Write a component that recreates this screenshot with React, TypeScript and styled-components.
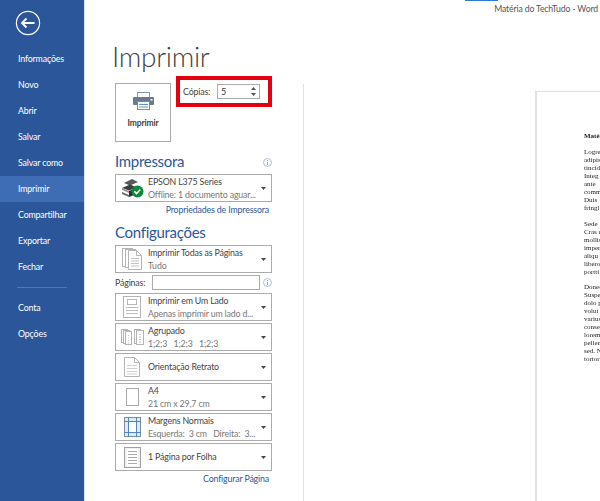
import React from "react";
import styled, { createGlobalStyle } from "styled-components";

const GlobalStyle = createGlobalStyle`
  html, body {
    margin: 0;
    padding: 0;
    background: #ffffff;
  }
  body {
    font-family: Lato, "Open Sans", "Liberation Sans", sans-serif;
    letter-spacing: -0.15px;
  }
`;

const menuTop = ["Informações", "Novo", "Abrir", "Salvar", "Salvar como", "Imprimir", "Compartilhar", "Exportar", "Fechar"];
const menuBottom = ["Conta", "Opções"];

const pageBlocks = [
  ["Logre", "adipis", "tincid", "Integ", "ante", "comm", "Duis", "fringl"],
  ["Sede", "Cras u", "mollis", "imper", "aliqu", "libero", "portti"],
  ["Donec", "Suspe", "dolo p", "volut", "varius", "conse", "lorem", "pellen", "sed. N", "tortor"],
];

const ArrowDown = () => (
  <Caret viewBox="0 0 5 3">
    <path d="M0 0h5L2.5 3z" fill="#444" />
  </Caret>
);

const InfoIcon = () => (
  <svg width="9" height="9" viewBox="0 0 9 9">
    <circle cx="4.5" cy="4.5" r="4" fill="none" stroke="#a9bfdc" />
    <rect x="4" y="4" width="1" height="3" fill="#8fabd2" />
    <rect x="4" y="2" width="1" height="1" fill="#8fabd2" />
  </svg>
);

const Sheet = ({ x, y, w, h, lines = 0 }: { x: number; y: number; w: number; h: number; lines?: number }) => (
  <g>
    <rect x={x + 0.5} y={y + 0.5} width={w} height={h} fill="#fff" stroke="#b4b4b4" />
    {Array.from({ length: lines }).map((_, i) => (
      <path key={i} d={`M${x + 3} ${y + 4.5 + i * 2.5}h${w - 5}`} stroke="#c4c4c4" strokeWidth="1" />
    ))}
  </g>
);

const AllPagesIcon = () => (
  <svg width="20" height="22" viewBox="0 0 20 22">
    <Sheet x={0} y={0} w={10} h={18} />
    <Sheet x={3} y={1} w={10} h={18} />
    <path d="M6.5 2.5h8l5 5v14h-13z" fill="#fff" stroke="#b4b4b4" />
    <path d="M14.5 2.5v5h5" fill="none" stroke="#b4b4b4" />
    <path d="M9 10.5h8M9 13h8M9 15.5h8M9 18h8" stroke="#c4c4c4" />
  </svg>
);

const OneSideIcon = () => (
  <svg width="18" height="22" viewBox="0 0 18 22">
    <rect x="0.5" y="0.5" width="17" height="21" fill="#fff" stroke="#b4b4b4" />
    <rect x="4.5" y="3.5" width="9" height="5" fill="#fff" stroke="#b8b8b8" />
    <path d="M3 11.5h12M3 14.5h12M3 17.5h12" stroke="#bcbcbc" />
  </svg>
);

const CollatedIcon = () => (
  <svg width="23" height="16" viewBox="0 0 23 16">
    <Sheet x={0} y={0} w={6} h={13} />
    <Sheet x={2} y={1} w={6} h={13} />
    <Sheet x={4} y={2} w={6} h={13} lines={4} />
    <Sheet x={13} y={0} w={6} h={14} />
    <Sheet x={15} y={1} w={7} h={14} lines={4} />
  </svg>
);

const PortraitIcon = () => (
  <svg width="16" height="20" viewBox="0 0 16 20">
    <path d="M.5.5h10l5 5v14H.5z" fill="#fff" stroke="#b4b4b4" />
    <path d="M10.5.5v5h5" fill="none" stroke="#b4b4b4" />
    <path d="M3 8.5h10M3 11.5h10M3 14.5h10M3 17h10" stroke="#cfcfcf" />
  </svg>
);

const A4Icon = () => (
  <svg width="13" height="18" viewBox="0 0 13 18">
    <rect x="0.5" y="0.5" width="12" height="17" fill="#fff" stroke="#a8a8a8" />
  </svg>
);

const MarginsIcon = () => (
  <svg width="17" height="20" viewBox="0 0 17 20">
    <rect x="0.5" y="0.5" width="16" height="19" fill="#fff" stroke="#7c8ea3" />
    <path d="M1 1h3v18H1zM13 1h3v18h-3z" fill="#dfeaf6" />
    <path d="M1 1h15v3H1zM1 16h15v3H1z" fill="#dfeaf6" />
    <path d="M0 4.5h17M0 15.5h17M4.5 0v20M12.5 0v20" stroke="#4f86bd" />
  </svg>
);

const PerSheetIcon = () => (
  <svg width="17" height="21" viewBox="0 0 17 21">
    <rect x="0.5" y="0.5" width="16" height="20" fill="#f1f1f1" stroke="#a0a0a0" />
    <rect x="3" y="2" width="11" height="17" fill="#fff" />
    <path d="M4 4.5h9M4 7.5h9M4 10.5h9M4 13.5h9M4 16.5h9" stroke="#a8a8a8" />
  </svg>
);

const PrinterStackIcon = () => (
  <svg width="23" height="19" viewBox="0 0 23 19">
    <path d="M3 4l8-4 6 3-8 3.5z" fill="#5a5a5a" />
    <path d="M1 9l8-3.5 7 3-8 3z" fill="#3f3f3f" />
    <path d="M1 9v2l7 3v-2z" fill="#9a9a9a" />
    <path d="M1 13l7 3v2l-7-3z" fill="#6a6a6a" />
    <path d="M8 12v6l5-2v-6z" fill="#2e2e2e" />
    <circle cx="16.5" cy="12.5" r="6" fill="#0e8a3a" />
    <path d="M13.4 12.4l2.2 2.2 3.7-4" fill="none" stroke="#fff" strokeWidth="1.5" />
  </svg>
);

const BigPrinterIcon = () => (
  <svg width="21" height="18" viewBox="0 0 21 18">
    <rect x="4.5" y="0.5" width="12" height="6" fill="#fff" stroke="#8796a6" />
    <rect x="0" y="5" width="21" height="8" rx="1" fill="#6a7a8c" />
    <rect x="4.5" y="9.5" width="12" height="8" fill="#fff" stroke="#7e8d9d" />
    <path d="M6 12.5h9M6 15h9" stroke="#5c93cc" />
    <rect x="17.5" y="7" width="2" height="1.5" fill="#fff" />
  </svg>
);

const dropdowns = [
  { title: "Imprimir Todas as Páginas", sub: "Tudo", icon: <AllPagesIcon /> },
  { title: "Imprimir em Um Lado", sub: "Apenas imprimir um lado d...", icon: <OneSideIcon />, pagesBefore: true },
  { title: "Agrupado", sub: "1;2;3   1;2;3   1;2;3", icon: <CollatedIcon /> },
  { title: "Orientação Retrato", icon: <PortraitIcon /> },
  { title: "A4", sub: "21 cm x 29,7 cm", icon: <A4Icon /> },
  { title: "Margens Normais", sub: "Esquerda:  3 cm   Direita:  3...", icon: <MarginsIcon /> },
  { title: "1 Página por Folha", icon: <PerSheetIcon /> },
];

const Dropdown = ({ title, sub, icon }: { title: string; sub?: string; icon: React.ReactNode }) => (
  <DropBox>
    <IconSlot>{icon}</IconSlot>
    <DropText>
      <DropTitle>{title}</DropTitle>
      {sub && <DropSub>{sub}</DropSub>}
    </DropText>
    <ArrowDown />
  </DropBox>
);

export default function App() {
  return (
    <Window>
      <GlobalStyle />
      <Sidebar>
        <BackButton>
          <svg width="26" height="26" viewBox="0 0 26 26">
            <circle cx="13" cy="13" r="11.6" fill="none" stroke="#fff" strokeWidth="1.2" />
            <path d="M19.5 13H7M11.5 8.5L7 13l4.5 4.5" fill="none" stroke="#fff" strokeWidth="1.8" />
          </svg>
        </BackButton>
        <MenuList>
          {menuTop.map((m) => (
            <MenuItem key={m} $active={m === "Imprimir"}>{m}</MenuItem>
          ))}
        </MenuList>
        <MenuDivider />
        <MenuList>
          {menuBottom.map((m) => (
            <MenuItem key={m}>{m}</MenuItem>
          ))}
        </MenuList>
      </Sidebar>
      <Content>
        <TitleBar>
          <AccentStrip />
          <DocTitle>Matéria do TechTudo - Word</DocTitle>
        </TitleBar>
        <Columns>
          <Panel>
            <PageTitle>Imprimir</PageTitle>
            <PrintRow>
              <PrintButton>
                <BigPrinterIcon />
                <PrintLabel>Imprimir</PrintLabel>
              </PrintButton>
              <CopiesBox>
                <CopiesLabel>Cópias:</CopiesLabel>
                <Spinner>
                  <SpinValue>5</SpinValue>
                  <SpinArrows>
                    <svg width="5" height="9" viewBox="0 0 5 9">
                      <path d="M0 3L2.5 0 5 3zM0 6l2.5 3L5 6z" fill="#555" />
                    </svg>
                  </SpinArrows>
                </Spinner>
              </CopiesBox>
            </PrintRow>
            <SectionHead $top={6}>
              <SectionTitle>Impressora</SectionTitle>
              <HeadInfo><InfoIcon /></HeadInfo>
            </SectionHead>
            <DropBox>
              <IconSlot><PrinterStackIcon /></IconSlot>
              <DropText>
                <DropTitle>EPSON L375 Series</DropTitle>
                <DropSub>Offline: 1 documento aguar...</DropSub>
              </DropText>
              <ArrowDown />
            </DropBox>
            <PanelLink>Propriedades de Impressora</PanelLink>
            <SectionHead $top={1}>
              <SectionTitle>Configurações</SectionTitle>
            </SectionHead>
            <DropStack>
              {dropdowns.map((d) => (
                <React.Fragment key={d.title}>
                  {d.pagesBefore && (
                    <PagesRow>
                      <PagesLabel>Páginas:</PagesLabel>
                      <PagesInput />
                      <InfoIcon />
                    </PagesRow>
                  )}
                  <Dropdown title={d.title} sub={d.sub} icon={d.icon} />
                </React.Fragment>
              ))}
            </DropStack>
            <PanelLink>Configurar Página</PanelLink>
          </Panel>
          <Preview>
            <PageSheet>
              <PageHeading>Maté</PageHeading>
              {pageBlocks.map((block, i) => (
                <PageBlock key={i}>
                  {block.map((line) => (
                    <PageLine key={line}>{line}</PageLine>
                  ))}
                </PageBlock>
              ))}
            </PageSheet>
          </Preview>
        </Columns>
      </Content>
    </Window>
  );
}

const Window = styled.div`
  display: flex;
  width: 600px;
  height: 501px;
  overflow: hidden;
  background: #ffffff;
`;

const Sidebar = styled.nav`
  flex: 0 0 85px;
  box-sizing: border-box;
  background: #2b579a;
  border-right: 1px solid #dbe6f5;
  display: flex;
  flex-direction: column;
`;

const BackButton = styled.div`
  height: 46px;
  padding: 10px 0 0 15px;
  box-sizing: border-box;
`;

const MenuList = styled.div`
  display: flex;
  flex-direction: column;
`;

const MenuItem = styled.div<{ $active?: boolean }>`
  height: 26px;
  line-height: 26px;
  padding-left: 18px;
  font-size: 8.8px;
  color: #ffffff;
  background: ${(p) => (p.$active ? "#3e6db5" : "transparent")};
`;

const MenuDivider = styled.div`
  height: 1px;
  margin: 7px 17px;
  background: #5577ad;
`;

const Content = styled.main`
  flex: 1;
  min-width: 0;
  display: flex;
  flex-direction: column;
`;

const TitleBar = styled.header`
  position: relative;
  height: 16px;
  display: flex;
  justify-content: flex-end;
  padding-right: 2px;
`;

const AccentStrip = styled.div`
  position: absolute;
  top: 0;
  left: 380px;
  width: 33px;
  height: 1px;
  background: #2b7cd3;
`;

const DocTitle = styled.div`
  font-size: 8.7px;
  line-height: 17px;
  color: #555555;
`;

const Columns = styled.div`
  flex: 1;
  display: flex;
  min-height: 0;
`;

const Panel = styled.section`
  flex: 0 0 217px;
  min-width: 0;
  box-sizing: border-box;
  padding: 0 30px;
  display: flex;
  flex-direction: column;
  align-items: stretch;
`;

const PageTitle = styled.h1`
  margin: 22px 0 0 -3px;
  height: 38px;
  font-size: 28px;
  line-height: 37px;
  font-weight: 300;
  letter-spacing: -0.3px;
  color: #444444;
`;

const PrintRow = styled.div`
  display: flex;
  align-items: flex-start;
  gap: 5px;
`;

const PrintButton = styled.div`
  width: 56px;
  height: 59px;
  margin-top: 7px;
  box-sizing: border-box;
  border: 1px solid #ababab;
  display: flex;
  flex-direction: column;
  align-items: center;
  padding-top: 8px;
  gap: 8px;
`;

const PrintLabel = styled.div`
  font-size: 8.5px;
  font-weight: 700;
  color: #444444;
`;

const CopiesBox = styled.div`
  box-sizing: border-box;
  width: 96px;
  height: 31px;
  border: 4px solid #e3000f;
  display: flex;
  align-items: center;
  padding: 0 8px 0 3px;
  justify-content: space-between;
`;

const CopiesLabel = styled.span`
  font-size: 8.8px;
  color: #444444;
`;

const Spinner = styled.div`
  box-sizing: border-box;
  width: 43px;
  height: 15px;
  border: 1px solid #ababab;
  display: flex;
  align-items: center;
  justify-content: space-between;
  padding: 0 3px;
`;

const SpinValue = styled.span`
  font-size: 9px;
  color: #333333;
`;

const SpinArrows = styled.span`
  display: flex;
`;

const SectionHead = styled.div<{ $top: number }>`
  position: relative;
  margin-top: ${(p) => p.$top}px;
  height: 26px;
`;

const SectionTitle = styled.h2`
  margin: 0;
  font-size: 15px;
  line-height: 26px;
  font-weight: 400;
  letter-spacing: -0.3px;
  color: #2b579a;
`;

const HeadInfo = styled.span`
  position: absolute;
  right: 0;
  top: 3px;
`;

const DropStack = styled.div`
  display: flex;
  flex-direction: column;
  gap: 2px;
`;

const DropBox = styled.div`
  box-sizing: border-box;
  height: 28px;
  border: 1px solid #ababab;
  display: flex;
  align-items: center;
  padding: 0 5px 0 0;
`;

const IconSlot = styled.div`
  flex: 0 0 32px;
  display: flex;
  justify-content: center;
  align-items: center;
`;

const DropText = styled.div`
  flex: 1;
  min-width: 0;
  display: flex;
  flex-direction: column;
  gap: 1px;
`;

const DropTitle = styled.div`
  font-size: 8.8px;
  line-height: 12px;
  color: #444444;
  white-space: nowrap;
`;

const DropSub = styled.div`
  font-size: 8.8px;
  line-height: 12px;
  color: #777777;
  white-space: pre;
`;

const Caret = styled.svg`
  flex: 0 0 5px;
  width: 5px;
  height: 3px;
`;

const PanelLink = styled.div`
  font-size: 8.8px;
  line-height: 16px;
  text-align: right;
  padding-right: 3px;
  color: #2b579a;
`;

const PagesRow = styled.div`
  height: 15px;
  margin-bottom: 1px;
  display: flex;
  align-items: center;
  gap: 3px;
`;

const PagesLabel = styled.span`
  flex: 0 0 34px;
  font-size: 8.8px;
  color: #444444;
`;

const PagesInput = styled.div`
  box-sizing: border-box;
  width: 109px;
  height: 15px;
  border: 1px solid #ababab;
`;

const Preview = styled.section`
  flex: 1;
  min-width: 0;
  margin: 68px 0 0 1px;
  border-left: 1px solid #e1e1e1;
  padding: 7px 0 0 231px;
`;

const PageSheet = styled.div`
  height: 420px;
  border-left: 2px solid #e1e1e1;
  border-top: 1px solid #e1e1e1;
  padding: 40px 0 0 47px;
  font-family: "Liberation Serif", serif;
  letter-spacing: 0;
  color: #222222;
  overflow: hidden;
  filter: grayscale(1);
`;

const PageHeading = styled.div`
  font-size: 7px;
  font-weight: 700;
  line-height: 8px;
  margin-bottom: 8px;
`;

const PageBlock = styled.div`
  margin-bottom: 7.5px;
`;

const PageLine = styled.div`
  font-size: 7px;
  line-height: 8px;
  white-space: nowrap;
`;
